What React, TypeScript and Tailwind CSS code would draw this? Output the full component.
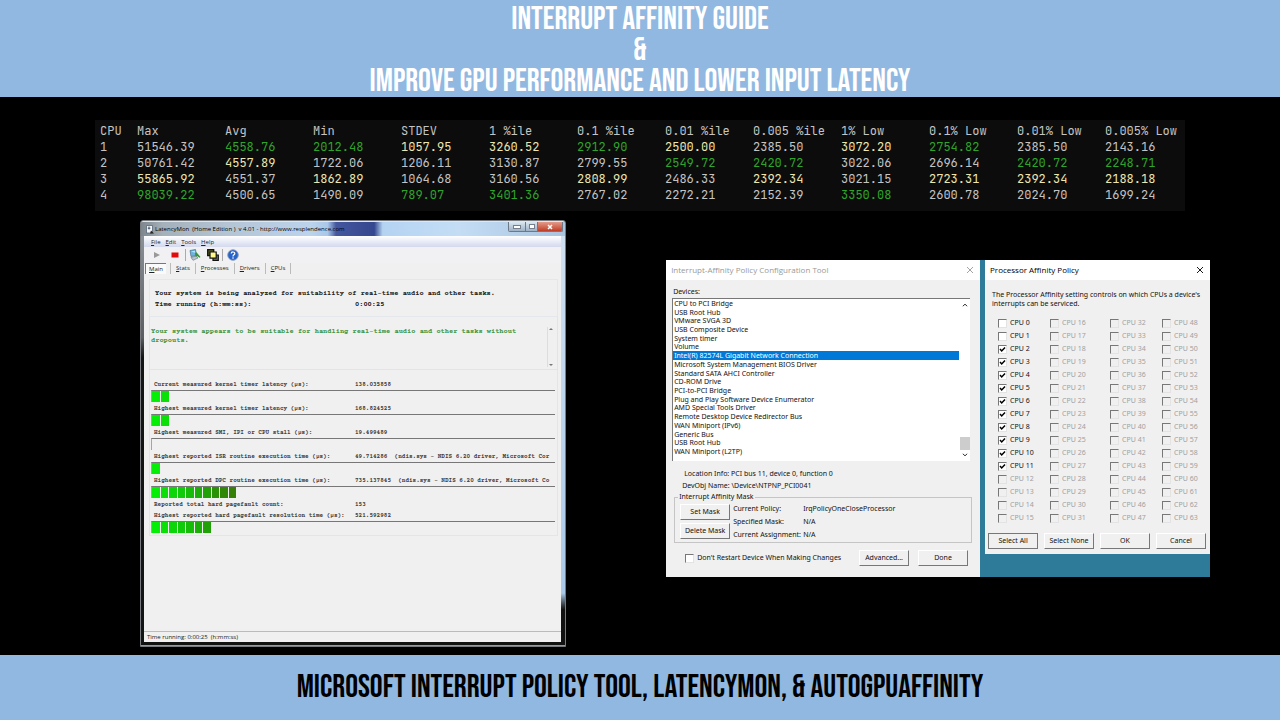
import { clsx } from "clsx";

const benchHeads = [
  "CPU", "Max", "Avg", "Min", "STDEV", "1 %ile", "0.1 %ile", "0.01 %ile",
  "0.005 %ile", "1% Low", "0.1% Low", "0.01% Low", "0.005% Low",
];

// "+" marks the best value of a column, "~" the runner-up
const benchRows = [
  "1 51546.39 +4558.76 +2012.48 ~1057.95 ~3260.52 +2912.90 ~2500.00 2385.50 ~3072.20 +2754.82 2385.50 2143.16",
  "2 50761.42 ~4557.89 1722.06 1206.11 3130.87 2799.55 +2549.72 +2420.72 3022.06 2696.14 +2420.72 +2248.71",
  "3 ~55865.92 4551.37 ~1862.89 1064.68 3160.56 ~2808.99 2486.33 ~2392.34 3021.15 ~2723.31 ~2392.34 ~2188.18",
  "4 +98039.22 4500.65 1490.09 +789.07 +3401.36 2767.02 2272.21 2152.39 +3350.08 2600.78 2024.70 1699.24",
].map((row) => row.split(" "));

const Benchmark = () => (
  <div className="mx-[95px] bg-[#0c0c0c] pb-2 pl-[5px] pt-[3px]">
    <table className="w-full table-fixed border-collapse text-left font-['JetBrains_Mono','DejaVu_Sans_Mono',monospace] text-[12px] leading-4 text-[#c4c4c4]">
      <thead>
        <tr>
          {benchHeads.map((head, i) => (
            <th
              key={head}
              scope="col"
              className={clsx(
                "whitespace-nowrap p-0 font-normal",
                i === 0 && "w-[37px]",
                i > 0 && i < 12 && "w-[88px]"
              )}
            >
              {head}
            </th>
          ))}
        </tr>
      </thead>
      <tbody>
        {benchRows.map((row) => (
          <tr key={row[0]}>
            {row.map((cell, i) => (
              <td
                key={i}
                className={clsx(
                  "p-0",
                  cell.startsWith("+") && "text-[#2fa52b]",
                  cell.startsWith("~") && "text-[#ece6b0]"
                )}
              >
                {cell.replace(/[+~]/, "")}
              </td>
            ))}
          </tr>
        ))}
      </tbody>
    </table>
  </div>
);

const Mnemonic = ({ text }: { text: string }) => (
  <>
    <span className="underline">{text[0]}</span>
    {text.slice(1)}
  </>
);

const segmentColors = [
  "bg-[#05ee05]", "bg-[#0adf08]", "bg-[#0cd60a]", "bg-[#10cb0a]", "bg-[#15bd08]",
  "bg-[#1bae08]", "bg-[#22a008]", "bg-[#2a9207]", "bg-[#308807]", "bg-[#358006]",
];

type ReadingProps = {
  label: string;
  value: string;
  note?: string;
  segments?: number;
};

const readings: ReadingProps[] = [
  { label: "Current measured kernel timer latency (µs):", value: "138.035858", segments: 2 },
  { label: "Highest measured kernel timer latency (µs):", value: "168.824525", segments: 2 },
  { label: "Highest measured SMI, IPI or CPU stall (µs):", value: "19.499489", segments: 0 },
  {
    label: "Highest reported ISR routine execution time (µs):",
    value: "49.714286",
    note: "(ndis.sys - NDIS 6.20 driver, Microsoft Cor",
    segments: 1,
  },
  {
    label: "Highest reported DPC routine execution time (µs):",
    value: "735.137845",
    note: "(ndis.sys - NDIS 6.20 driver, Microsoft Co",
    segments: 10,
  },
  { label: "Reported total hard pagefault count:", value: "153" },
  { label: "Highest reported hard pagefault resolution time (µs):", value: "521.592982", segments: 7 },
];

const Reading = ({ label, value, note, segments }: ReadingProps) => (
  <div>
    <div className="flex h-[11px] whitespace-pre pl-[3px] leading-[11px]">
      <span className="w-[201px] shrink-0">{label}</span>
      <span>
        {value}
        {note && `  ${note}`}
      </span>
    </div>
    {segments !== undefined && (
      <div
        role="meter"
        aria-label={label}
        aria-valuenow={segments}
        aria-valuemin={0}
        aria-valuemax={48}
        className="mb-px h-3 border-l border-t border-l-[#a5a5a5] border-t-[#777]"
      >
        <div className="flex h-[11px] gap-px" style={{ width: `${(segments / 48) * 100}%` }}>
          {segmentColors.slice(0, segments).map((color) => (
            <span key={color} className={clsx("flex-1", color)} />
          ))}
        </div>
      </div>
    )}
  </div>
);

const AppIcon = () => (
  <svg viewBox="0 0 8 9" className="h-[9px] w-2" aria-hidden="true">
    <path d="M.5.5h6v7.5h-6z" fill="#f4f7fa" stroke="#596675" strokeWidth=".8" />
    <path d="M3 1.5v3M1.8 3.2h2.6" stroke="#31455d" strokeWidth=".9" />
    <path d="m5 5.5 3 3H4z" fill="#222" />
  </svg>
);

const PlayIcon = () => (
  <svg viewBox="0 0 8 8" className="h-2 w-2" aria-hidden="true">
    <path d="M1 1v6l6-3z" fill="#999" />
  </svg>
);

const StopIcon = () => (
  <svg viewBox="0 0 8 8" className="h-2 w-2" aria-hidden="true">
    <path d="M.5 1.5h7v5h-7z" fill="#e00b0b" />
  </svg>
);

const AnalyzeIcon = () => (
  <svg viewBox="0 0 12 12" className="h-3 w-3" aria-hidden="true">
    <path d="M1 1.5 6.5.5l1 6L2 7.5z" fill="#6bb5df" stroke="#496d86" strokeWidth=".7" />
    <path d="m2 2.5 3.8-.8.4 2z" fill="#c1e6f7" />
    <path d="m2 8.5 5-1.5 2 2-5 2.3z" fill="#b8c4ce" stroke="#5f7182" strokeWidth=".6" />
    <path d="m6 4 1.5-.8L11.5 8l-1 .8-2-1.5-2 .3z" fill="#39933a" />
  </svg>
);

const LayersIcon = () => (
  <svg viewBox="0 0 12 12" className="h-3 w-3" aria-hidden="true">
    <path d="M.7.7h6v6h-6z" fill="#555820" stroke="#111" strokeWidth="1.3" />
    <path d="M6 6h5.3v5.3H6z" fill="#777" stroke="#111" strokeWidth="1.2" />
    <path d="M3 3h6.2v6.2H3z" fill="#fff98a" stroke="#111" strokeWidth="1.2" />
  </svg>
);

const HelpIcon = () => (
  <svg viewBox="0 0 12 12" className="h-3 w-3" aria-hidden="true">
    <circle cx="6" cy="6" r="5.3" fill="#2864c8" stroke="#8a9cbd" strokeWidth=".9" />
    <path d="M4.2 4.5C4.3 2.4 8 2.5 7.8 4.6 7.7 5.8 6 5.8 6 7.4" fill="none" stroke="#fff" strokeWidth="1.2" />
    <circle cx="6" cy="9" r=".8" fill="#fff" />
  </svg>
);

const LatencyMon = () => (
  <section className="flex h-[427px] min-w-0 flex-[425] flex-col rounded-t-[3px] border border-[#777b80] bg-[#111] font-['Open_Sans',sans-serif] text-[6px] text-[#222]">
    <header className="flex h-[15px] shrink-0 items-center rounded-t-[2px] border-t border-[#dfe8f0] bg-[linear-gradient(90deg,#7d858c_0%,#a4b0ba_5%,#b4c4d4_20%,#bcd3ec_40%,#a9c7e9_44%,#44569e_46%,#34478f_55%,#b4d3f2_57%,#c4ddf5_75%,#a9c4df_100%)] pl-[5px]">
      <AppIcon />
      <h2 className="ml-px flex-1 whitespace-pre text-[6px] text-black">
        {"LatencyMon  (Home Edition )  v 4.01 - http://www.resplendence.com"}
      </h2>
      <div className="mr-[2px] flex h-[10px] self-start overflow-hidden rounded-b-[2px] border border-t-0 border-[#6d7987]">
        <button type="button" aria-label="Minimize" className="flex w-[17px] items-center justify-center border-r border-[#6d7987] bg-linear-to-b from-[#dbe7f2] to-[#9eb1c5]">
          <span className="h-[2px] w-[6px] bg-white outline outline-[#75808c]" />
        </button>
        <button type="button" aria-label="Maximize" className="flex w-[12px] items-center justify-center border-r border-[#6d7987] bg-linear-to-b from-[#dbe7f2] to-[#9eb1c5]">
          <span className="h-[5px] w-[6px] border border-[#75808c] bg-white" />
        </button>
        <button type="button" aria-label="Close" className="flex w-[24px] items-center justify-center bg-linear-to-b from-[#e29a8b] to-[#c03a20]">
          <svg viewBox="0 0 6 6" className="h-[6px] w-[6px]" aria-hidden="true">
            <path d="m1 1 4 4M5 1 1 5" stroke="#fff" strokeWidth="1.5" />
          </svg>
        </button>
      </div>
    </header>

    <div className="flex min-h-0 flex-1 bg-linear-to-b from-[#8b9196] from-0% via-[#5b5e61] via-25% to-[#141414] to-30%">
      <div className="ml-[3px] flex min-w-0 flex-1 flex-col bg-[#f0f0f0]">
        <nav className="flex h-[11px] shrink-0 items-center gap-[5px] bg-linear-to-b from-white to-[#d3d9ed] pl-[7px]">
          {["File", "Edit", "Tools", "Help"].map((item) => (
            <button key={item} type="button" className="leading-[10px]">
              <Mnemonic text={item} />
            </button>
          ))}
        </nav>

        <div className="flex h-4 shrink-0 items-center bg-[#f1f1f3] pl-[9px]">
          <button type="button" aria-label="Start"><PlayIcon /></button>
          <button type="button" aria-label="Stop" className="ml-[10px]"><StopIcon /></button>
          <span className="ml-[6px] h-3 w-px bg-[#aaa]" />
          <button type="button" aria-label="Analyze" className="ml-[3px]"><AnalyzeIcon /></button>
          <button type="button" aria-label="Windows" className="ml-[6px]"><LayersIcon /></button>
          <span className="ml-[3px] h-3 w-px bg-[#aaa]" />
          <button type="button" aria-label="Help" className="ml-[4px]"><HelpIcon /></button>
        </div>

        <div role="tablist" className="flex h-[11px] shrink-0 pl-px">
          {["Main", "Stats", "Processes", "Drivers", "CPUs"].map((tab, i) => (
            <button
              key={tab}
              type="button"
              role="tab"
              aria-selected={i === 0}
              className={clsx(
                "leading-[11px]",
                i === 0
                  ? "mr-[4px] w-[21px] border-l border-t border-[#777] bg-[#fafafa]"
                  : "border-r border-[#bbb] px-[5px]",
                i === 1 && "border-l"
              )}
            >
              <Mnemonic text={tab} />
            </button>
          ))}
        </div>

        <div className="ml-[5px] mr-[3px] mt-[5px] flex-1 font-['Courier_Prime','Liberation_Mono',monospace]">
          <div className="h-[38px] border border-[#e4e8ec] pl-[5px] pt-2 text-[7px] font-bold leading-[11px]">
            <p>Your system is being analyzed for suitability of real-time audio and other tasks.</p>
            <p className="flex">
              <span className="w-[200px]">Time running (h:mm:ss):</span>
              <span>0:00:25</span>
            </p>
          </div>
          <div className="flex h-[53px] border border-t-0 border-[#dfe5ea] pl-px pt-[10px]">
            <p className="flex-1 text-[7px] font-bold leading-[9px] text-[#3f9545]">
              Your system appears to be suitable for handling real-time audio and other tasks without
              dropouts.
            </p>
            <div className="mb-[2px] mr-[3px] flex w-[7px] flex-col items-center justify-between border-l border-[#ddd] text-[#777]">
              <svg viewBox="0 0 4 4" className="h-1 w-1" aria-hidden="true"><path d="M0 3 2 1l2 2z" fill="currentColor" /></svg>
              <svg viewBox="0 0 4 4" className="h-1 w-1" aria-hidden="true"><path d="m0 1 2 2 2-2z" fill="currentColor" /></svg>
            </div>
          </div>
          <div className="h-[166px] border border-t-0 border-[#e2e6ea] pl-px pr-[2px] pt-[9px] text-[6px] font-bold text-[#444]">
            {readings.map((reading) => (
              <Reading key={reading.label} {...reading} />
            ))}
          </div>
        </div>

        <footer className="h-[11px] shrink-0 whitespace-pre border-t border-[#bbb] pl-[3px] leading-[11px]">
          {"Time running: 0:00:25  (h:mm:ss)"}
        </footer>
      </div>
      <div className="w-1 bg-linear-to-b from-[#cfe0f2] from-0% via-[#a9c9ea] via-88% to-[#111] to-92%" />
    </div>
    <div className="h-1 shrink-0 border-b border-[#999]" />
  </section>
);

const devices = [
  "CPU to PCI Bridge",
  "USB Root Hub",
  "VMware SVGA 3D",
  "USB Composite Device",
  "System timer",
  "Volume",
  "Intel(R) 82574L Gigabit Network Connection",
  "Microsoft System Management BIOS Driver",
  "Standard SATA AHCI Controller",
  "CD-ROM Drive",
  "PCI-to-PCI Bridge",
  "Plug and Play Software Device Enumerator",
  "AMD Special Tools Driver",
  "Remote Desktop Device Redirector Bus",
  "WAN Miniport (IPv6)",
  "Generic Bus",
  "USB Root Hub",
  "WAN Miniport (L2TP)",
];

const DialogButton = ({ children, focused }: { children: string; focused?: boolean }) => (
  <button
    type="button"
    className={clsx(
      "h-4 w-[50px] shrink-0 whitespace-nowrap border border-b-[#777] border-r-[#777] bg-[#f0f0f0] leading-[14px]",
      focused ? "border-l-[#777] border-t-[#777]" : "border-l-[#fff] border-t-[#fff]"
    )}
  >
    {children}
  </button>
);

const CheckBox = ({ label, checked, disabled }: { label: string; checked?: boolean; disabled?: boolean }) => (
  <label className={clsx("flex items-center gap-[3px] whitespace-nowrap", disabled && "text-[#a0a0a0]")}>
    <span className="relative flex">
      <input
        type="checkbox"
        defaultChecked={checked}
        disabled={disabled}
        className={clsx(
          "h-[9px] w-[9px] appearance-none border border-b-[#e3e3e3] border-l-[#777] border-r-[#e3e3e3] border-t-[#777]",
          disabled ? "bg-[#f0f0f0]" : "bg-white"
        )}
      />
      {checked && (
        <svg viewBox="0 0 9 9" className="pointer-events-none absolute inset-0" aria-hidden="true">
          <path d="m2 4 1.7 2L7 2.5" fill="none" stroke="#000" strokeWidth="1.5" />
        </svg>
      )}
    </span>
    {label}
  </label>
);

const TitleBar = ({ title, inactive }: { title: string; inactive?: boolean }) => (
  <header
    className={clsx(
      "flex h-5 shrink-0 items-center justify-between bg-white pl-[5px] pr-[6px] font-['Open_Sans',sans-serif]",
      inactive ? "text-[#999]" : "text-black"
    )}
  >
    <h2 className="text-[8px]">{title}</h2>
    <button type="button" aria-label="Close">
      <svg viewBox="0 0 8 8" className="h-2 w-2" aria-hidden="true">
        <path d="m1 1 6 6M7 1 1 7" stroke="currentColor" strokeWidth=".9" />
      </svg>
    </button>
  </header>
);

const PolicyTool = () => (
  <section className="flex min-w-0 flex-[314] flex-col bg-[#f0f0f0]">
    <TitleBar title="Interrupt-Affinity Policy Configuration Tool" inactive />
    <p className="mt-[7px] pl-[7px] leading-[10px]" id="devices">Devices:</p>
    <div className="ml-[6px] mr-[10px] mt-px flex h-[163px] border-l border-t border-[#777] bg-white">
      <ul role="listbox" aria-labelledby="devices" className="flex h-[157px] flex-1 flex-col">
        {devices.map((device, i) => (
          <li
            key={i}
            role="option"
            aria-selected={i === 6}
            className={clsx("flex min-h-0 flex-1 items-center pl-px leading-none", i === 6 && "bg-[#0078d7] text-white")}
          >
            {device}
          </li>
        ))}
      </ul>
      <div className="flex w-[11px] flex-col items-center py-[3px] text-[#333]">
        <svg viewBox="0 0 6 6" className="h-[6px] w-[6px]" aria-hidden="true">
          <path d="m.8 4.2 2.2-2 2.2 2" fill="none" stroke="currentColor" />
        </svg>
        <span className="mb-[2px] mt-auto h-[13px] w-[10px] bg-[#cdcdcd]" />
        <svg viewBox="0 0 6 6" className="h-[6px] w-[6px]" aria-hidden="true">
          <path d="m.8 1.8 2.2 2 2.2-2" fill="none" stroke="currentColor" />
        </svg>
      </div>
    </div>
    <p className="mt-[7px] pl-[18px] leading-3">Location Info: PCI bus 11, device 0, function 0</p>
    <p className="pl-4 leading-3">DevObj Name: \Device\NTPNP_PCI0041</p>
    <fieldset className="mx-2 flex h-[51px] border border-[#c5c5c5] pl-[5px]">
      <legend className="-ml-[2px] px-px leading-[10px]">Interrupt Affinity Mask</legend>
      <div className="flex flex-col gap-[3px] pt-[2px]">
        <DialogButton>Set Mask</DialogButton>
        <DialogButton>Delete Mask</DialogButton>
      </div>
      <dl className="ml-[3px] grid grid-cols-[70px_auto] content-start leading-[13px]">
        <dt>Current Policy:</dt>
        <dd>IrqPolicyOneCloseProcessor</dd>
        <dt>Specified Mask:</dt>
        <dd>N/A</dd>
        <dt>Current Assignment:</dt>
        <dd>N/A</dd>
      </dl>
    </fieldset>
    <div className="mt-[7px] flex items-center pl-[19px] pr-3">
      <CheckBox label="Don't Restart Device When Making Changes" />
      <div className="ml-auto flex gap-[9px]">
        <DialogButton>Advanced...</DialogButton>
        <DialogButton>Done</DialogButton>
      </div>
    </div>
  </section>
);

const AffinityDialog = () => (
  <section className="flex h-[294px] min-w-0 flex-[225] flex-col bg-[#f0f0f0]">
    <TitleBar title="Processor Affinity Policy" />
    <p className="mt-[10px] px-[7px] leading-[9px]">
      The Processor Affinity setting controls on which CPUs a device's interrupts can be serviced.
    </p>
    <div className="ml-[13px] mt-[9px] grid grid-flow-col grid-cols-[52px_60px_52px_auto] grid-rows-[repeat(16,13px)]">
      {Array.from({ length: 64 }, (_, cpu) => (
        <CheckBox key={cpu} label={`CPU ${cpu}`} checked={cpu > 1 && cpu < 12} disabled={cpu > 11} />
      ))}
    </div>
    <div className="mt-2 flex justify-between pl-[3px] pr-1">
      <DialogButton focused>Select All</DialogButton>
      <DialogButton>Select None</DialogButton>
      <DialogButton>OK</DialogButton>
      <DialogButton>Cancel</DialogButton>
    </div>
  </section>
);

const App = () => {
  return (
    <div className="flex min-h-screen flex-col bg-black">
      <header className="bg-[#90b8e1] pt-1 text-center font-['Bebas_Neue','Liberation_Sans_Narrow','Open_Sans',sans-serif] text-[32px] leading-[31px] text-white">
        <h1>
          INTERRUPT AFFINITY GUIDE
          <br />
          &amp;
          <br />
          IMPROVE GPU PERFORMANCE AND LOWER INPUT LATENCY
        </h1>
      </header>

      <main className="flex-1 pb-2 pt-[23px]">
        <Benchmark />
        <div className="mt-[9px] flex items-start gap-[100px] pl-[140px] pr-[70px]">
          <LatencyMon />
          <div className="mt-10 flex h-[317px] min-w-0 flex-[545] gap-[5px] bg-[#2d7b98] font-['Noto_Sans',sans-serif] text-[7px] text-[#111]">
            <PolicyTool />
            <AffinityDialog />
          </div>
        </div>
      </main>

      <footer className="bg-[#90b8e1] py-4 text-center font-['Bebas_Neue','Liberation_Sans_Narrow','Open_Sans',sans-serif] text-[32px] leading-[33px] text-black">
        MICROSOFT INTERRUPT POLICY TOOL, LATENCYMON, &amp; AUTOGPUAFFINITY
      </footer>
    </div>
  );
};

export default App;
